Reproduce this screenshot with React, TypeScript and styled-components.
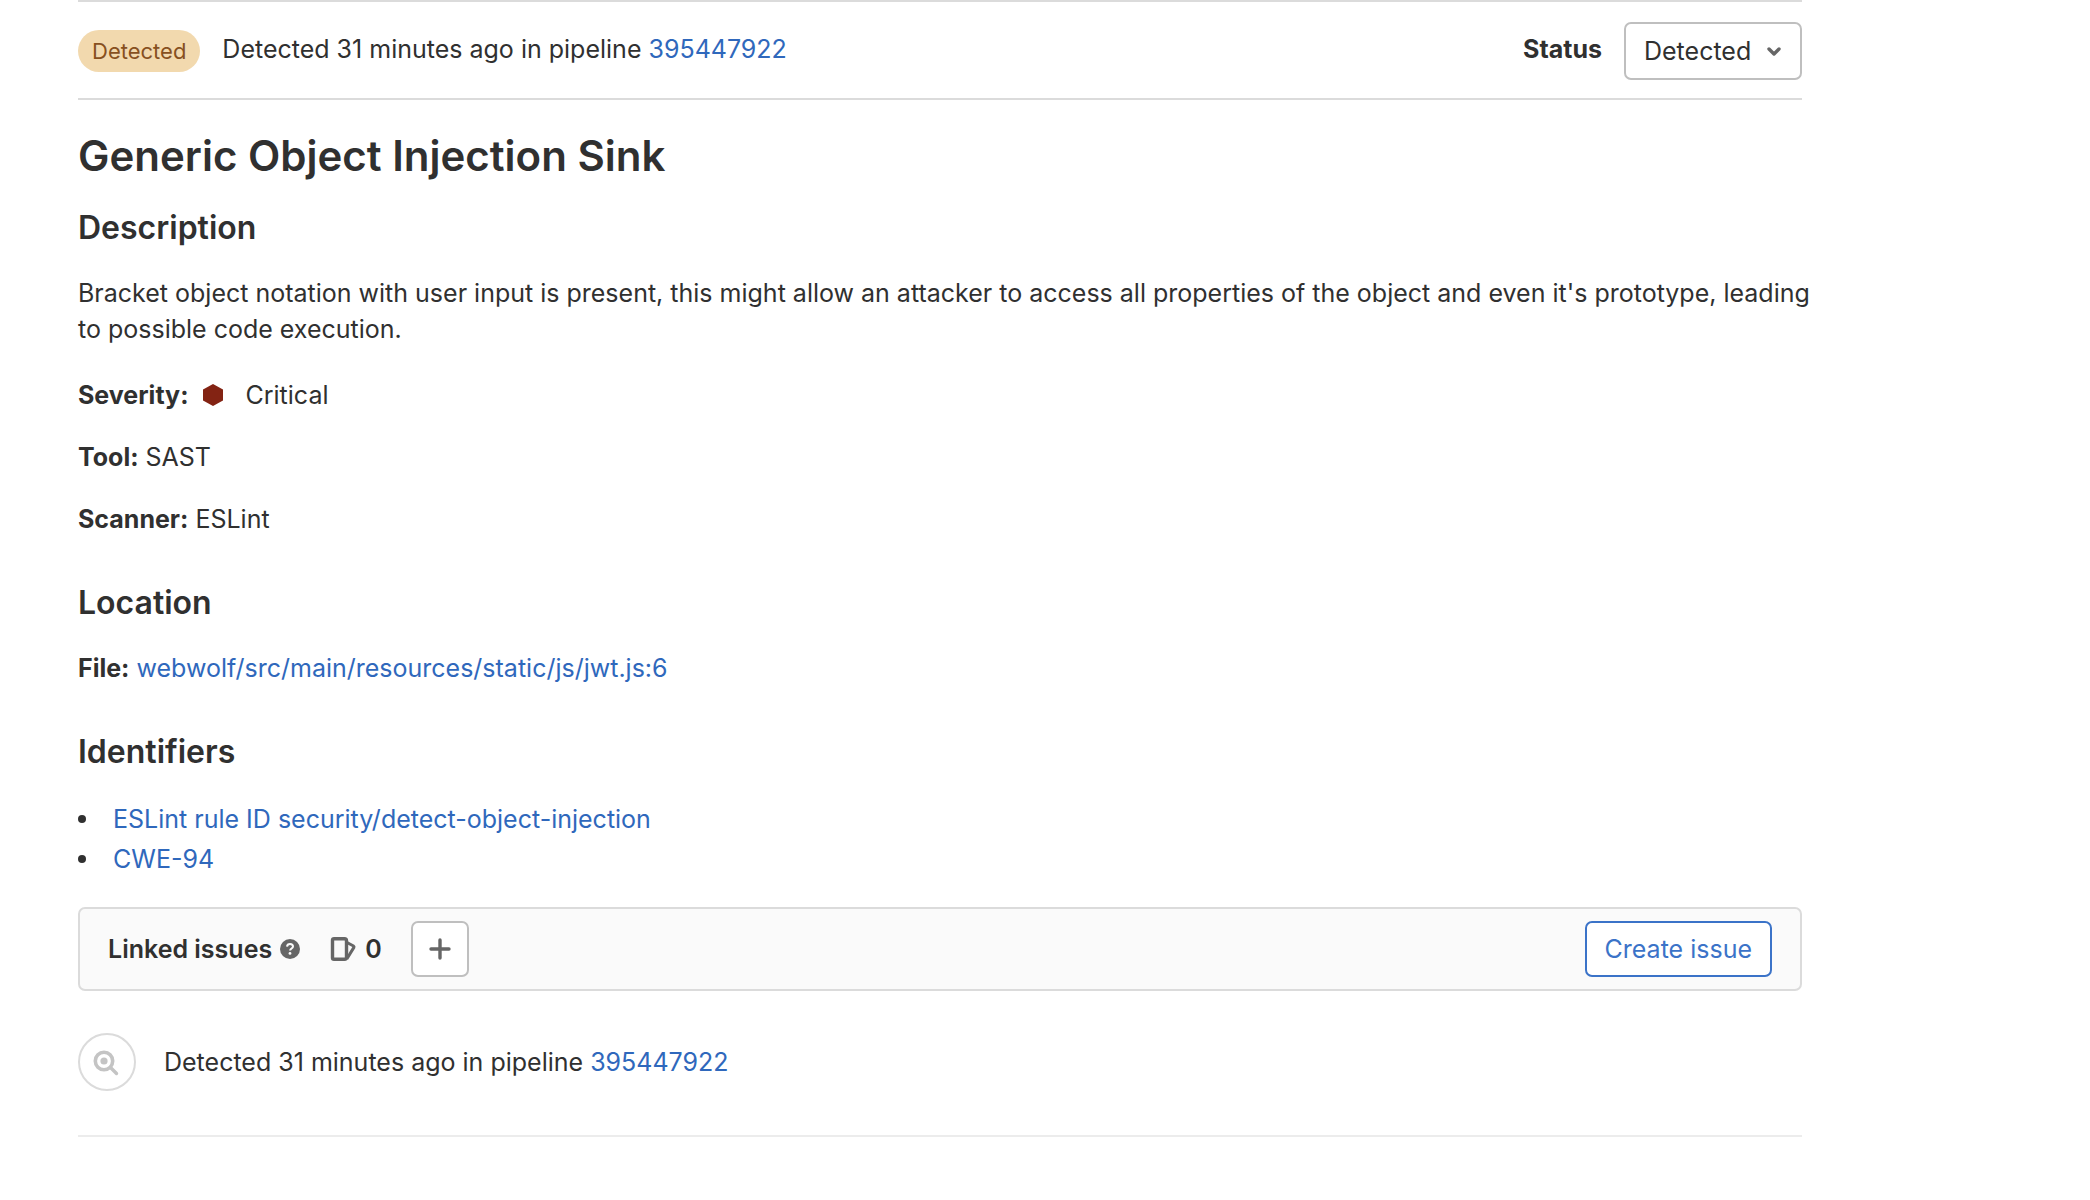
import React from "react";
import styled, { createGlobalStyle } from "styled-components";

const GlobalStyle = createGlobalStyle`
  *, *::before, *::after { box-sizing: border-box; }
  body {
    margin: 0;
    background: #fff;
    color: #303030;
    font: 400 25px/36px Inter, "Liberation Sans", sans-serif;
  }
`;

const Page = styled.main`
  padding: 0 288px 62px 78px;
`;

const Header = styled.header`
  display: flex;
  align-items: center;
  justify-content: space-between;
  height: 100px;
  padding-top: 2px;
  border-top: 2px solid #dbdbdb;
  border-bottom: 2px solid #dbdbdb;
`;

const HeaderGroup = styled.div`
  display: flex;
  align-items: center;
  gap: 22px;
`;

const HeaderText = styled.span`
  padding-bottom: 4px;
`;

const Badge = styled.span`
  padding: 4px 14px;
  border-radius: 21px;
  background: #f2d9ae;
  color: #87501f;
  font-size: 22px;
  line-height: 34px;
`;

const Link = styled.a`
  color: #2f68bc;
  text-decoration: none;
  &:hover { text-decoration: underline; }
`;

const StatusLabel = styled.label`
  padding-bottom: 4px;
  font-weight: 700;
`;

const SelectWrap = styled.div`
  display: grid;
  align-items: center;
  > * { grid-area: 1 / 1; }
`;

const Select = styled.select`
  appearance: none;
  height: 58px;
  padding: 0 48px 0 18px;
  border: 2px solid #bfbfbf;
  border-radius: 7px;
  background: #fff;
  color: inherit;
  font: inherit;
`;

const SelectArrow = styled.svg`
  justify-self: end;
  margin-right: 20px;
  pointer-events: none;
`;

const Title = styled.h1`
  margin: 29px 0 25px;
  font-size: 42px;
  line-height: 54px;
  font-weight: 600;
`;

const Heading = styled.h2`
  margin: 0 0 27px;
  font-size: 32px;
  line-height: 40px;
  font-weight: 600;
`;

const Section = styled.section`
  margin-bottom: 46px;
`;

const Description = styled.p`
  margin: 0 -8px 30px 0;
`;

const Details = styled.dl`
  display: grid;
  gap: 26px;
  margin: 0;
`;

const Detail = styled.div`
  display: flex;
  align-items: center;
  gap: 7px;
`;

const Term = styled.dt`
  font-weight: 700;
`;

const Value = styled.dd`
  display: flex;
  align-items: center;
  gap: 22px;
  margin: 0;
`;

const SeverityIcon = styled.svg`
  margin-left: 6px;
`;

const Identifiers = styled.ul`
  margin: 0 0 28px;
  padding: 0;
  list-style: none;
  line-height: 40px;
`;

const Identifier = styled.li`
  display: flex;
  align-items: center;
  gap: 27px;
  &::before {
    content: "";
    width: 8px;
    height: 8px;
    border-radius: 50%;
    background: #303030;
  }
`;

const Panel = styled.section`
  display: flex;
  align-items: center;
  justify-content: space-between;
  height: 84px;
  padding: 0 28px;
  border: 2px solid #dbdbdb;
  border-radius: 7px;
  background: #fafafa;
`;

const PanelGroup = styled.div`
  display: flex;
  align-items: center;
  gap: 29px;
`;

const PanelTitle = styled.h3`
  display: flex;
  align-items: center;
  gap: 8px;
  margin: 0;
  font-size: 25px;
  font-weight: 600;
`;

const Button = styled.button<{ $primary?: boolean }>`
  display: flex;
  align-items: center;
  justify-content: center;
  min-width: 58px;
  height: 56px;
  padding: 0 ${(p) => (p.$primary ? 18 : 0)}px;
  border: 2px solid ${(p) => (p.$primary ? "#3b73c8" : "#bfbfbf")};
  border-radius: 7px;
  background: #fff;
  color: ${(p) => (p.$primary ? "#3b73c8" : "#666")};
  font: inherit;
  cursor: pointer;
`;

const Note = styled.div`
  display: flex;
  align-items: center;
  gap: 28px;
  padding: 42px 0 44px;
  border-bottom: 2px solid #ececec;
`;

const NoteIcon = styled.span`
  display: flex;
  align-items: center;
  justify-content: center;
  width: 58px;
  height: 58px;
  border: 2px solid #dbdbdb;
  border-radius: 50%;
`;

function PipelineText() {
  return (
    <span>
      Detected 31 minutes ago in pipeline <Link href="#pipeline">395447922</Link>
    </span>
  );
}

export default function App() {
  return (
    <>
      <GlobalStyle />
      <Page>
        <Header>
          <HeaderGroup>
            <Badge>Detected</Badge>
            <HeaderText>
              <PipelineText />
            </HeaderText>
          </HeaderGroup>
          <HeaderGroup>
            <StatusLabel htmlFor="status">Status</StatusLabel>
            <SelectWrap>
              <Select id="status" defaultValue="Detected">
                <option>Detected</option>
              </Select>
              <SelectArrow width="16" height="12" viewBox="0 0 16 12" fill="none" aria-hidden="true">
                <path d="M3 4l5 5 5-5" stroke="#666" strokeWidth="3.4" strokeLinecap="round" strokeLinejoin="round" />
              </SelectArrow>
            </SelectWrap>
          </HeaderGroup>
        </Header>

        <Title>Generic Object Injection Sink</Title>

        <Section>
          <Heading>Description</Heading>
          <Description>
            Bracket object notation with user input is present, this might allow an attacker to access all properties of
            the object and even it's prototype, leading to possible code execution.
          </Description>
          <Details>
            <Detail>
              <Term>Severity:</Term>
              <Value>
                <SeverityIcon width="22" height="22" viewBox="0 0 22 22" aria-hidden="true">
                  <path d="M11 0l10 5.6v10.8L11 22 1 16.400V5.600z" fill="#832313" />
                </SeverityIcon>
                Critical
              </Value>
            </Detail>
            <Detail>
              <Term>Tool:</Term>
              <Value>SAST</Value>
            </Detail>
            <Detail>
              <Term>Scanner:</Term>
              <Value>ESLint</Value>
            </Detail>
          </Details>
        </Section>

        <Section>
          <Heading>Location</Heading>
          <Details>
            <Detail>
              <Term>File:</Term>
              <Value>
                <Link href="#file">webwolf/src/main/resources/static/js/jwt.js:6</Link>
              </Value>
            </Detail>
          </Details>
        </Section>

        <Heading>Identifiers</Heading>
        <Identifiers>
          <Identifier>
            <Link href="#rule">ESLint rule ID security/detect-object-injection</Link>
          </Identifier>
          <Identifier>
            <Link href="#cwe">CWE-94</Link>
          </Identifier>
        </Identifiers>

        <Panel>
          <PanelGroup>
            <PanelTitle>
              Linked issues
              <svg width="20" height="20" viewBox="0 0 20 20" fill="none" aria-hidden="true">
                <circle cx="10" cy="10" r="10" fill="#666" />
                <path d="M7 7.600C7.200 5.800 8.400 5 10 5c1.700 0 3 1 3 2.500 0 2-2.800 2-2.900 4" stroke="#fafafa" strokeWidth="2" />
                <circle cx="10" cy="14.400" r="1.400" fill="#fafafa" />
              </svg>
            </PanelTitle>
            <PanelTitle as="span">
              <svg width="28" height="26" viewBox="0 0 28 26" fill="none" stroke="#666" strokeLinejoin="round" aria-hidden="true">
                <path d="M5 2.700h10.500q2 0 2 2v16.600q0 2-2 2H5q-1.500 0-1.500-1.500V4.200Q3.500 2.700 5 2.700z" strokeWidth="3.400" />
                <path d="M18 6.500l6.500 3.500q.8.500.4 1.400L17.800 23" strokeWidth="3" />
              </svg>
              0
            </PanelTitle>
            <Button type="button" aria-label="Add a linked issue">
              <svg width="22" height="22" viewBox="0 0 22 22" aria-hidden="true">
                <path d="M11 2v18M2 11h18" stroke="#666" strokeWidth="3.400" strokeLinecap="round" />
              </svg>
            </Button>
          </PanelGroup>
          <Button type="button" $primary>
            Create issue
          </Button>
        </Panel>

        <Note>
          <NoteIcon>
            <svg width="28" height="28" viewBox="0 0 28 28" fill="none" stroke="#c4c4c4" aria-hidden="true">
              <circle cx="11" cy="13" r="8.700" strokeWidth="3.600" />
              <circle cx="11" cy="13" r="3.600" fill="#c4c4c4" stroke="none" />
              <path d="M17.500 19.500l6 6" strokeWidth="3.400" strokeLinecap="round" />
            </svg>
          </NoteIcon>
          <PipelineText />
        </Note>
      </Page>
    </>
  );
}
